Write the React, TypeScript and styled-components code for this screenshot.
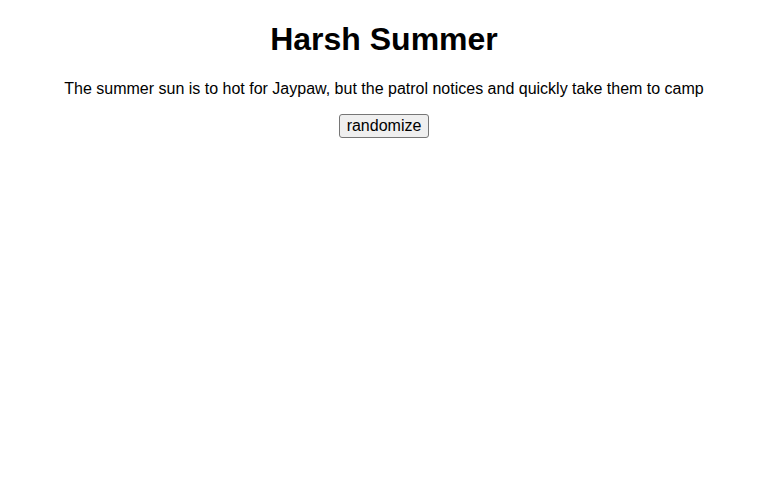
import React, { useState } from "react";
import styled, { createGlobalStyle } from "styled-components";

const GlobalStyle = createGlobalStyle`
  body {
    margin: 0;
    background: #ffffff;
    color: #000000;
    font-family: "Liberation Sans", Arial, sans-serif;
  }
`;

const Page = styled.div`
  padding: 0 8px;
  text-align: center;
`;

const Title = styled.h1`
  font-size: 32px;
  font-weight: 700;
  margin: 21.44px 0;
`;

const Story = styled.p`
  font-size: 16px;
  margin: 16px 0;
`;

const RandomButton = styled.button`
  font-family: "Liberation Sans", Arial, sans-serif;
  font-size: 16px;
  color: #000000;
  background: #efefef;
  border: 1px solid #767676;
  border-radius: 3px;
  padding: 2px 7px;
  cursor: pointer;

  &:hover {
    background: #e5e5e5;
  }
`;

const prompts = [
  {
    title: "Harsh Summer",
    text: "The summer sun is to hot for Jaypaw, but the patrol notices and quickly take them to camp",
  },
  {
    title: "Leaf-bare Hunt",
    text: "Snow covers the forest floor, and the hunting patrol struggles to find any prey",
  },
  {
    title: "Border Skirmish",
    text: "A rival patrol crosses the border, and the warriors rush to defend their territory",
  },
];

export default function App() {
  const [index, setIndex] = useState(0);
  const prompt = prompts[index];

  const randomize = () => {
    setIndex(Math.floor(Math.random() * prompts.length));
  };

  return (
    <Page>
      <GlobalStyle />
      <Title>{prompt.title}</Title>
      <Story>{prompt.text}</Story>
      <RandomButton onClick={randomize}>randomize</RandomButton>
    </Page>
  );
}
